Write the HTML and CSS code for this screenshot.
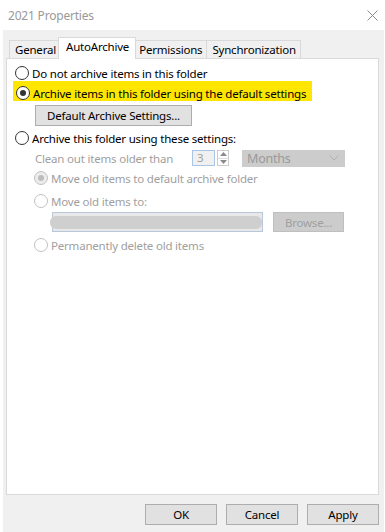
FILE: index.html
```html
<!DOCTYPE html>
<html lang="en">
<head>
    <meta charset="UTF-8">
    <meta name="viewport" content="width=device-width, initial-scale=1.0">
    <title>2021 Properties</title>
    <link rel="stylesheet" href="styles.css">
</head>
<body>
    <div class="window">
        <!-- Title bar -->
        <div class="titlebar">
            <span class="title">2021 Properties</span>
            <svg class="close" width="11" height="11" viewBox="0 0 11 11" aria-label="Close">
                <path d="M0.5 0.5 L10.5 10.5 M10.5 0.5 L0.5 10.5" stroke="#8a8a8a" stroke-width="1" fill="none"/>
            </svg>
        </div>

        <div class="frame">
            <!-- Tabs -->
            <div class="tabs">
                <div class="tab">General</div>
                <div class="tab active">AutoArchive</div>
                <div class="tab">Permissions</div>
                <div class="tab">Synchronization</div>
            </div>

            <!-- Tab panel -->
            <div class="panel">
                <label class="option row-first">
                    <span class="radio"></span>
                    <span>Do not archive items in this folder</span>
                </label>

                <div class="highlight">
                    <label class="option">
                        <span class="radio checked"></span>
                        <span>Archive items in this folder using the default settings</span>
                    </label>
                </div>

                <button class="btn btn-default-settings">Default Archive Settings...</button>

                <label class="option row-custom">
                    <span class="radio"></span>
                    <span>Archive this folder using these settings:</span>
                </label>

                <div class="clean-row">
                    <span class="muted">Clean out items older than</span>
                    <span class="spin-box">3</span>
                    <span class="spinner">
                        <span class="spin-btn">
                            <svg width="7" height="4" viewBox="0 0 7 4"><path d="M0 4 L3.5 0 L7 4 Z" fill="#8a8a8a"/></svg>
                        </span>
                        <span class="spin-btn">
                            <svg width="7" height="4" viewBox="0 0 7 4"><path d="M0 0 L3.5 4 L7 0 Z" fill="#8a8a8a"/></svg>
                        </span>
                    </span>
                    <span class="dropdown">
                        <span>Months</span>
                        <svg width="10" height="6" viewBox="0 0 10 6"><path d="M0.5 0.5 L5 5 L9.5 0.5" stroke="#b0b0b0" fill="none"/></svg>
                    </span>
                </div>

                <label class="option sub muted row-move-default">
                    <span class="radio disabled checked"></span>
                    <span>Move old items to default archive folder</span>
                </label>

                <label class="option sub muted row-move-to">
                    <span class="radio disabled"></span>
                    <span>Move old items to:</span>
                </label>

                <div class="path-row">
                    <span class="path-box"><span class="blur"></span></span>
                    <button class="btn btn-disabled btn-browse">Browse...</button>
                </div>

                <label class="option sub muted row-delete">
                    <span class="radio disabled"></span>
                    <span>Permanently delete old items</span>
                </label>
            </div>

            <!-- Dialog buttons -->
            <div class="footer">
                <button class="btn btn-footer">OK</button>
                <button class="btn btn-footer">Cancel</button>
                <button class="btn btn-footer">Apply</button>
            </div>
        </div>
    </div>
</body>
</html>
```

FILE: styles.css
```css
/* Windows dialog look */
body, html {
    margin: 0;
    background: #ffffff;
    font-family: "Noto Sans", "Open Sans", sans-serif;
    font-size: 11.5px;
    letter-spacing: -0.2px;
    color: #000000;
}

.window {
    width: 385px;
    height: 532px;
    display: flex;
    flex-direction: column;
}

.titlebar {
    height: 30px;
    display: flex;
    align-items: center;
    justify-content: space-between;
    padding: 0 7px 0 8px;
    box-sizing: border-box;
}

.title {
    color: #999999;
    font-size: 12px;
}

.frame {
    flex: 1;
    background: #f0f0f0;
    margin: 0 1px 0 3px;
    padding: 0 5px 0 3px;
    display: flex;
    flex-direction: column;
}

/* Tabs */
.tabs {
    display: flex;
    align-items: flex-end;
    height: 28px;
    padding-left: 4px;
    position: relative;
    z-index: 2;
}

.tab {
    height: 18px;
    line-height: 18px;
    padding: 0 4px 0 5px;
    border: 1px solid #d9d9d9;
    border-bottom: none;
    margin-left: -1px;
    background: #f0f0f0;
    box-sizing: border-box;
}

.tab.active {
    height: 22px;
    line-height: 17px;
    background: #ffffff;
    margin: 0 -2px -1px -3px;
    padding: 0 6px 0 7px;
    position: relative;
}

.panel {
    height: 437px;
    box-sizing: border-box;
    background: #ffffff;
    border: 1px solid #d9d9d9;
    padding: 4px 0 0 8px;
    display: flex;
    flex-direction: column;
    align-items: flex-start;
}

/* Radio options */
.option {
    display: flex;
    align-items: center;
    height: 20px;
    white-space: nowrap;
}

.radio {
    width: 12px;
    height: 12px;
    border: 1px solid #333333;
    border-radius: 50%;
    background: #ffffff;
    margin-right: 3px;
    box-sizing: content-box;
    display: inline-flex;
    align-items: center;
    justify-content: center;
    flex-shrink: 0;
}

.radio.checked::after {
    content: "";
    width: 6px;
    height: 6px;
    border-radius: 50%;
    background: #333333;
}

.radio.disabled {
    border-color: #c2c2c2;
}

.radio.disabled.checked {
    background: #ececec;
}

.radio.disabled.checked::after {
    background: #bdbdbd;
}

.highlight {
    background: #ffe600;
    width: 299px;
    height: 20px;
    margin: -2px 0 0 -2px;
    padding: 4px 0 0 3px;
    box-sizing: border-box;
    display: flex;
    align-items: center;
}

.highlight .option {
    height: 16px;
}

.muted {
    color: #a0a0a0;
}

.sub {
    margin-left: 19px;
}

/* Buttons */
.btn {
    font-family: inherit;
    font-size: 11.5px;
    letter-spacing: -0.2px;
    color: #000000;
    background: #e1e1e1;
    border: 1px solid #adadad;
    padding: 0;
    height: 21px;
    box-sizing: border-box;
}

.btn-default-settings {
    width: 157px;
    margin: 4px 0 0 20px;
}

.btn-disabled {
    background: #cccccc;
    border-color: #bfbfbf;
    color: #a0a0a0;
}

.row-custom {
    margin-top: 2px;
}

/* Clean out row */
.clean-row {
    display: flex;
    align-items: center;
    height: 16px;
    margin: 2px 0 0 20px;
}

.clean-row .muted {
    width: 157px;
}

.spin-box {
    width: 23px;
    height: 16px;
    box-sizing: border-box;
    border: 1px solid #a9c4e4;
    background: #f0f0f0;
    color: #a0a0a0;
    padding-left: 4px;
    line-height: 14px;
}

.spinner {
    display: flex;
    flex-direction: column;
    margin-left: 2px;
    width: 12px;
    height: 16px;
    border: 1px solid #cccccc;
    box-sizing: border-box;
}

.spin-btn {
    flex: 1;
    display: flex;
    align-items: center;
    justify-content: center;
}

.spin-btn + .spin-btn {
    border-top: 1px solid #dddddd;
}

.dropdown {
    display: flex;
    align-items: center;
    justify-content: space-between;
    width: 103px;
    height: 17px;
    box-sizing: border-box;
    margin-left: 13px;
    padding: 0 6px 0 5px;
    background: #cccccc;
    color: #999999;
    font-size: 12.5px;
}

.row-move-default {
    margin-top: 2px;
}

.row-move-to {
    margin-top: 3px;
}

/* Path row */
.path-row {
    display: flex;
    align-items: center;
    margin: 1px 0 0 37px;
}

.path-box {
    width: 211px;
    height: 20px;
    box-sizing: border-box;
    border: 1px solid #b8c8da;
    background: #e8e8e8;
    display: flex;
    align-items: center;
    position: relative;
}

.blur {
    position: absolute;
    left: -3px;
    top: 3px;
    width: 212px;
    height: 13px;
    border-radius: 6px;
    background: #cfcfcf;
}

.btn-browse {
    width: 71px;
    height: 20px;
    margin-left: 10px;
}

.row-delete {
    margin-top: 3px;
}

/* Footer */
.footer {
    display: flex;
    justify-content: flex-end;
    gap: 9px;
    padding: 9px 0 0 0;
}

.btn-footer {
    width: 72px;
}
```
